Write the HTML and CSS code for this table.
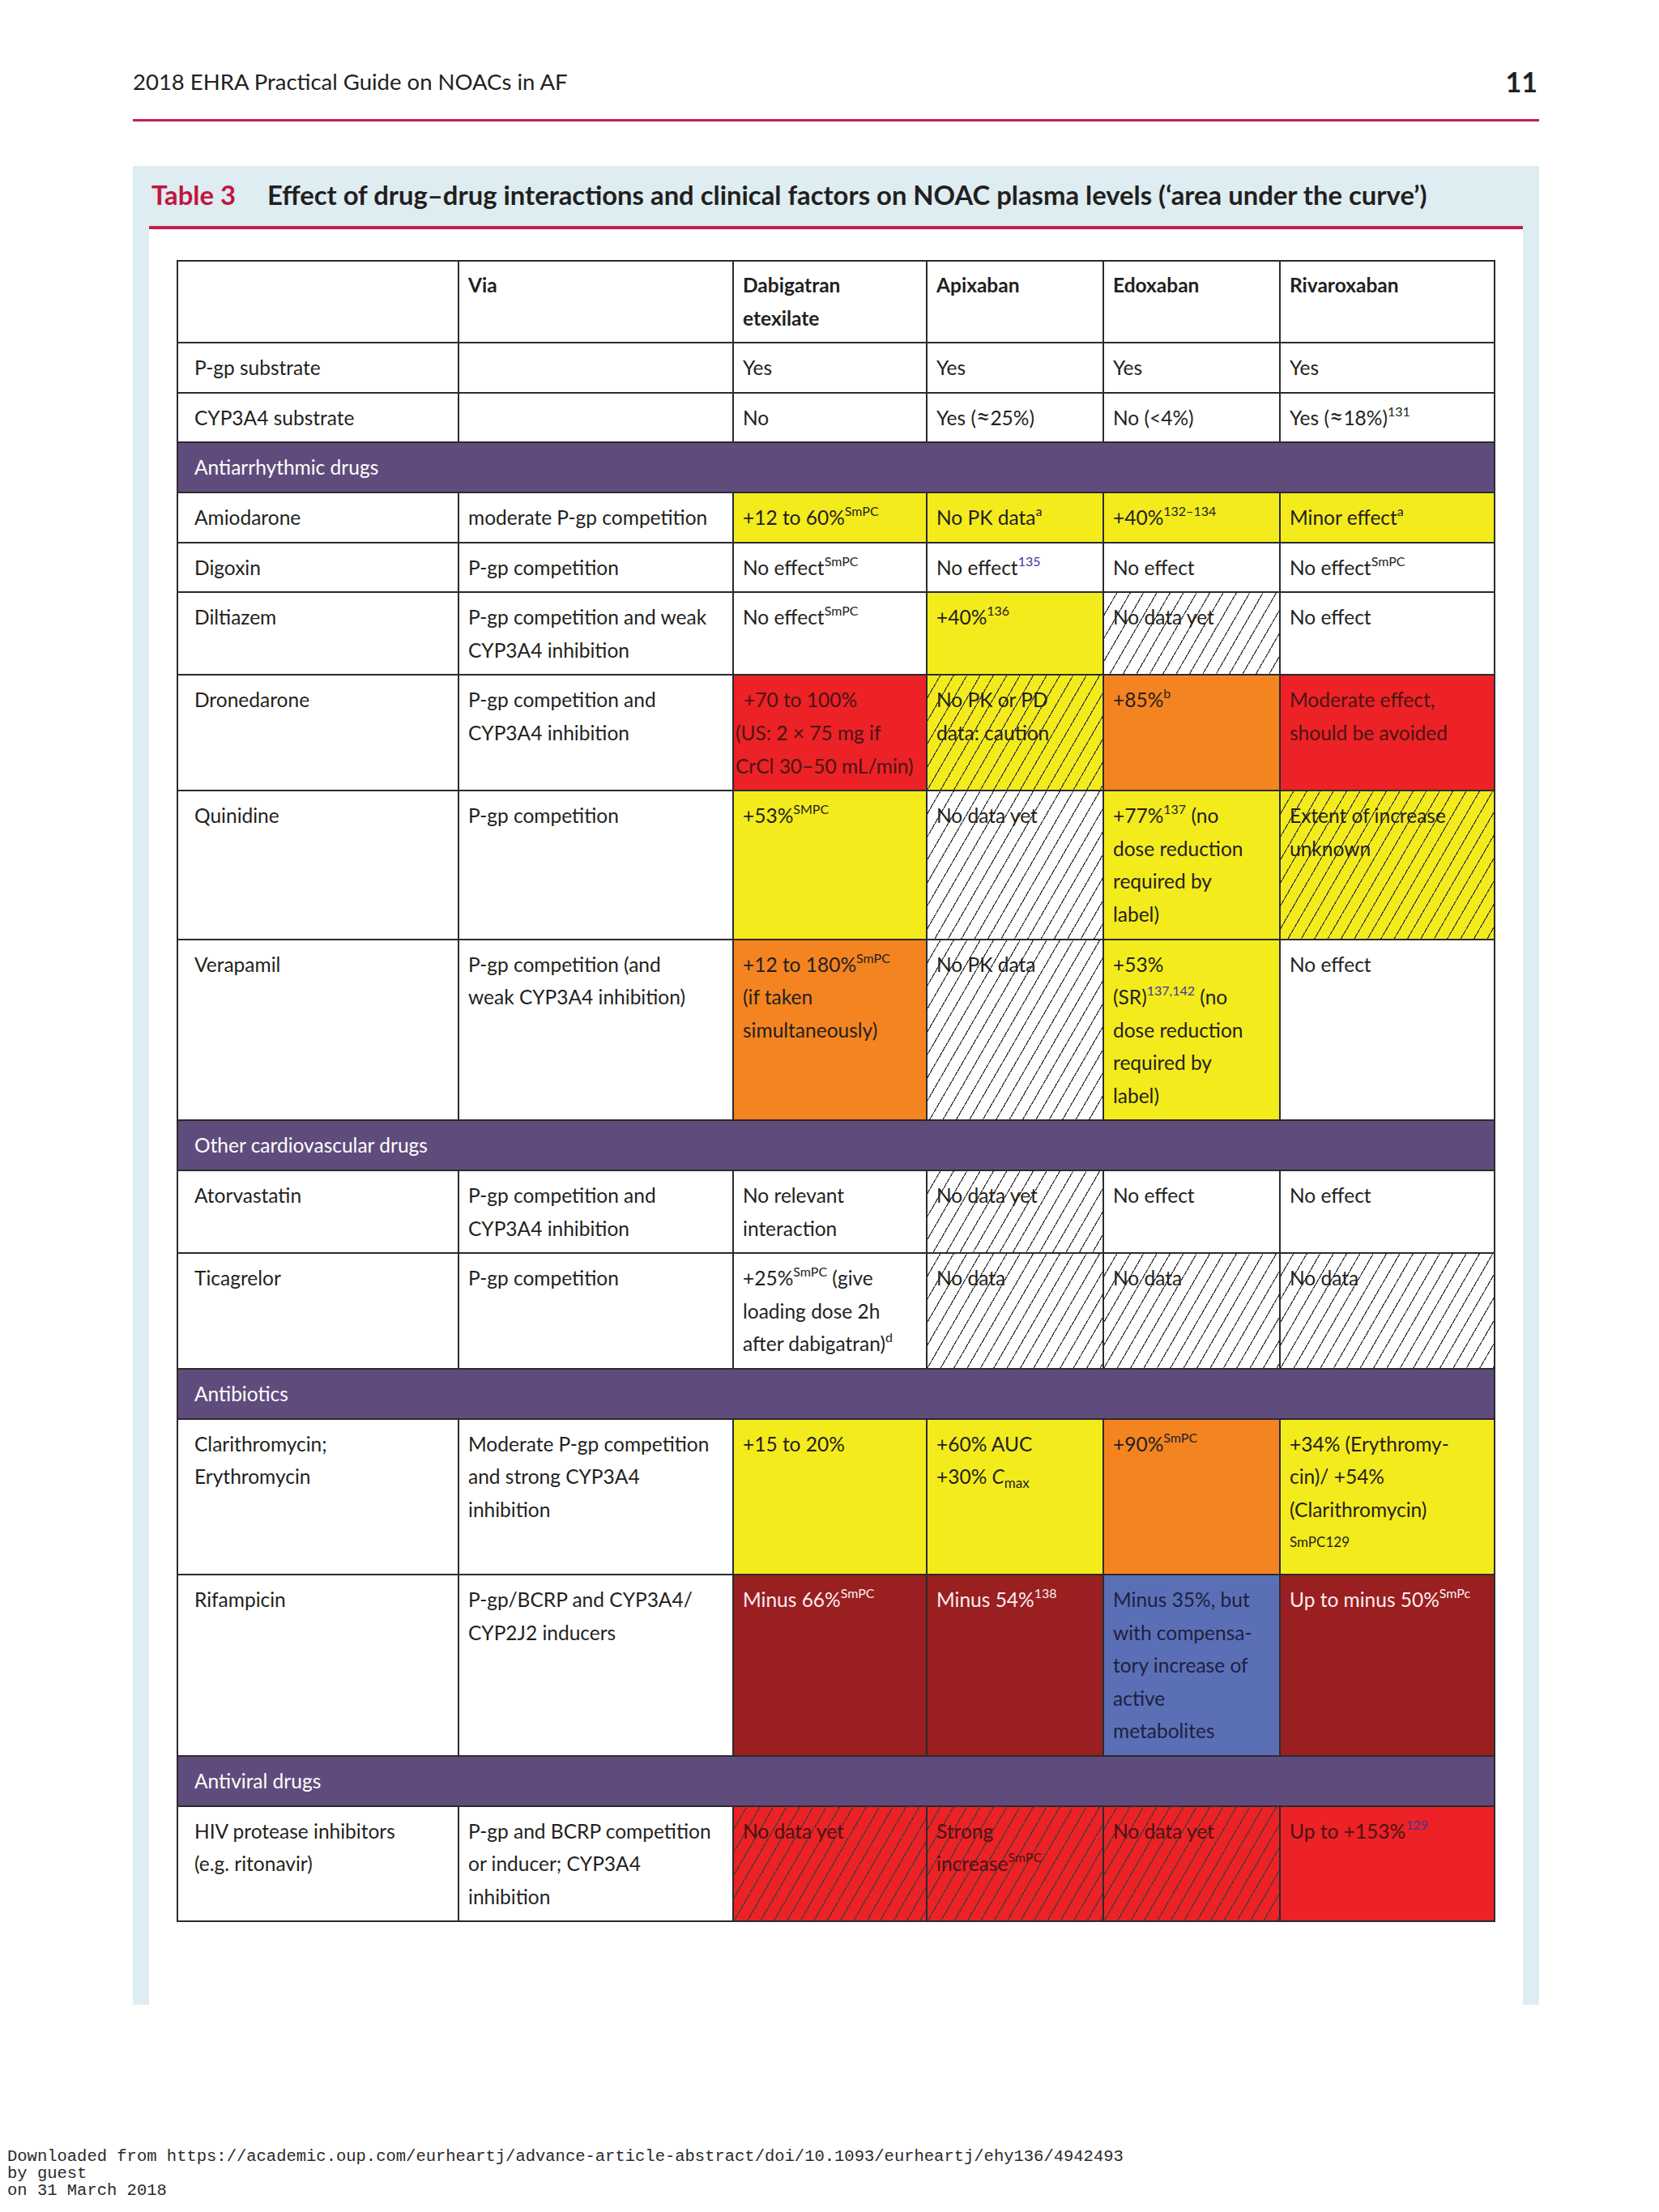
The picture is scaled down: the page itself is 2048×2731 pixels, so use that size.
FILE: index.html
```html
<!DOCTYPE html>
<html lang="en">
<head>
<meta charset="UTF-8">
<title>2018 EHRA Practical Guide on NOACs in AF - Table 3</title>
<link rel="stylesheet" href="styles.css">
</head>
<body>
<div class="page">
    <div class="running-head">
        <span class="journal">2018 EHRA Practical Guide on NOACs in AF</span>
        <span class="folio">11</span>
    </div>

    <div class="table-box">
        <div class="caption">
            <span class="label">Table 3</span>
            <span class="title">Effect of drug–drug interactions and clinical factors on NOAC plasma levels (‘area under the curve’)</span>
        </div>
        <div class="inner">
            <table class="ddi">
                <colgroup>
                    <col style="width:347px">
                    <col style="width:339px">
                    <col style="width:239px">
                    <col style="width:218px">
                    <col style="width:218px">
                    <col style="width:265px">
                </colgroup>
                <thead>
                    <tr>
                        <th></th>
                        <th>Via</th>
                        <th>Dabigatran<br>etexilate</th>
                        <th>Apixaban</th>
                        <th>Edoxaban</th>
                        <th>Rivaroxaban</th>
                    </tr>
                </thead>
                <tbody>
                    <tr>
                        <td>P-gp substrate</td>
                        <td></td>
                        <td>Yes</td>
                        <td>Yes</td>
                        <td>Yes</td>
                        <td>Yes</td>
                    </tr>
                    <tr>
                        <td>CYP3A4 substrate</td>
                        <td></td>
                        <td>No</td>
                        <td>Yes (<span class="approx">≈</span>25%)</td>
                        <td>No (&lt;4%)</td>
                        <td>Yes (<span class="approx">≈</span>18%)<sup>131</sup></td>
                    </tr>

                    <tr class="group"><td colspan="6">Antiarrhythmic drugs</td></tr>
                    <tr>
                        <td>Amiodarone</td>
                        <td>moderate P-gp competition</td>
                        <td class="yellow">+12 to 60%<sup>SmPC</sup></td>
                        <td class="yellow">No PK data<sup>a</sup></td>
                        <td class="yellow">+40%<sup>132–134</sup></td>
                        <td class="yellow">Minor effect<sup>a</sup></td>
                    </tr>
                    <tr>
                        <td>Digoxin</td>
                        <td>P-gp competition</td>
                        <td>No effect<sup>SmPC</sup></td>
                        <td>No effect<sup class="ref">135</sup></td>
                        <td>No effect</td>
                        <td>No effect<sup>SmPC</sup></td>
                    </tr>
                    <tr>
                        <td>Diltiazem</td>
                        <td>P-gp competition and weak<br>CYP3A4 inhibition</td>
                        <td>No effect<sup>SmPC</sup></td>
                        <td class="yellow">+40%<sup>136</sup></td>
                        <td class="hatch">No data yet</td>
                        <td>No effect</td>
                    </tr>
                    <tr>
                        <td>Dronedarone</td>
                        <td>P-gp competition and<br>CYP3A4 inhibition</td>
                        <td class="red tight"><span class="indent">+70 to 100%</span><br>(US: 2 × 75 mg if<br>CrCl 30–50 mL/min)</td>
                        <td class="yellow hatch">No PK or PD<br>data: caution</td>
                        <td class="orange">+85%<sup>b</sup></td>
                        <td class="red">Moderate effect,<br>should be avoided</td>
                    </tr>
                    <tr>
                        <td>Quinidine</td>
                        <td>P-gp competition</td>
                        <td class="yellow">+53%<sup>SMPC</sup></td>
                        <td class="hatch">No data yet</td>
                        <td class="yellow">+77%<sup>137</sup> (no<br>dose reduction<br>required by<br>label)</td>
                        <td class="yellow hatch">Extent of increase<br>unknown</td>
                    </tr>
                    <tr>
                        <td>Verapamil</td>
                        <td>P-gp competition (and<br>weak CYP3A4 inhibition)</td>
                        <td class="orange">+12 to 180%<sup>SmPC</sup><br>(if taken<br>simultaneously)</td>
                        <td class="hatch">No PK data</td>
                        <td class="yellow">+53%<br>(SR)<sup class="ref">137,142</sup> (no<br>dose reduction<br>required by<br>label)</td>
                        <td>No effect</td>
                    </tr>

                    <tr class="group"><td colspan="6">Other cardiovascular drugs</td></tr>
                    <tr>
                        <td>Atorvastatin</td>
                        <td>P-gp competition and<br>CYP3A4 inhibition</td>
                        <td>No relevant<br>interaction</td>
                        <td class="hatch">No data yet</td>
                        <td>No effect</td>
                        <td>No effect</td>
                    </tr>
                    <tr>
                        <td>Ticagrelor</td>
                        <td>P-gp competition</td>
                        <td>+25%<sup>SmPC</sup> (give<br>loading dose 2h<br>after dabigatran)<sup>d</sup></td>
                        <td class="hatch">No data</td>
                        <td class="hatch">No data</td>
                        <td class="hatch">No data</td>
                    </tr>

                    <tr class="group"><td colspan="6">Antibiotics</td></tr>
                    <tr>
                        <td>Clarithromycin;<br>Erythromycin</td>
                        <td>Moderate P-gp competition<br>and strong CYP3A4<br>inhibition</td>
                        <td class="yellow">+15 to 20%</td>
                        <td class="yellow">+60% AUC<br>+30% <i>C</i><sub>max</sub></td>
                        <td class="orange">+90%<sup>SmPC</sup></td>
                        <td class="yellow">+34% (Erythromy-<br>cin)/ +54%<br>(Clarithromycin)<br><span class="tiny">SmPC129</span></td>
                    </tr>
                    <tr>
                        <td>Rifampicin</td>
                        <td>P-gp/BCRP and CYP3A4/<br>CYP2J2 inducers</td>
                        <td class="darkred">Minus 66%<sup>SmPC</sup></td>
                        <td class="darkred">Minus 54%<sup>138</sup></td>
                        <td class="blue">Minus 35%, but<br>with compensa-<br>tory increase of<br>active<br>metabolites</td>
                        <td class="darkred">Up to minus 50%<sup>SmPc</sup></td>
                    </tr>

                    <tr class="group"><td colspan="6">Antiviral drugs</td></tr>
                    <tr>
                        <td>HIV protease inhibitors<br>(e.g. ritonavir)</td>
                        <td>P-gp and BCRP competition<br>or inducer; CYP3A4<br>inhibition</td>
                        <td class="red hatch">No data yet</td>
                        <td class="red hatch">Strong<br>increase<sup>SmPC</sup></td>
                        <td class="red hatch">No data yet</td>
                        <td class="red">Up to +153%<sup class="ref">129</sup></td>
                    </tr>
                </tbody>
            </table>
        </div>
    </div>
</div>

<div class="download-note">Downloaded from https://academic.oup.com/eurheartj/advance-article-abstract/doi/10.1093/eurheartj/ehy136/4942493<br>by guest<br>on 31 March 2018</div>
</body>
</html>
```

FILE: styles.css
```css
body {
    margin: 0;
    background-color: #ffffff;
    color: #231f20;
    font-family: 'Lato', 'Open Sans', sans-serif;
}

.page {
    padding: 0 148px 0 164px;
}

.running-head {
    display: flex;
    justify-content: space-between;
    align-items: flex-end;
    height: 150px;
    padding-bottom: 29px;
    box-sizing: border-box;
    border-bottom: 3px solid #c4204a;
}

.journal {
    font-size: 27.5px;
    font-weight: 400;
    line-height: 34px;
}

.folio {
    font-size: 34px;
    font-weight: 700;
    line-height: 34px;
    margin-right: 2px;
}

.table-box {
    margin-top: 55px;
    background-color: #deedf1;
    padding: 0 20px;
}

.caption {
    display: flex;
    align-items: center;
    gap: 39px;
    height: 74px;
    margin: 0 -20px;
    padding: 0 0 4px 23px;
    box-sizing: border-box;
    font-size: 32.8px;
    font-weight: 700;
}

.caption .label {
    color: #c3153f;
}

.inner {
    background-color: #ffffff;
    border-top: 4px solid #c4204a;
    padding: 38px 0 102px;
}

.ddi {
    border-collapse: collapse;
    table-layout: fixed;
    width: 1628px;
    margin: 0 auto;
    font-size: 24.5px;
    line-height: 40.6px;
}

.ddi th,
.ddi td {
    border: 2px solid #2b2a2e;
    padding: 10px 10px 9px 11px;
    text-align: left;
    vertical-align: top;
    white-space: nowrap;
}

.ddi th {
    font-weight: 700;
    padding-top: 9px;
}

.ddi td:first-child,
.ddi th:first-child {
    padding-left: 20px;
}

.ddi sup {
    font-size: 16px;
    line-height: 0;
    vertical-align: 11px;
}

.ddi sub {
    font-size: 17px;
    line-height: 0;
    vertical-align: -5px;
}

.ddi sup.ref {
    color: #3a3a9c;
}

.approx {
    font-size: 30px;
    line-height: 0;
}

.ddi .tiny {
    font-size: 17px;
    vertical-align: 12px;
}

.ddi tr.group td {
    background-color: #604c7c;
    color: #ffffff;
    padding-left: 20px;
    font-weight: 400;
}

.yellow {
    background-color: #f4eb1c;
}

.orange {
    background-color: #f48420;
}

.red {
    background-color: #ec2226;
    color: #4a1414;
}

.darkred {
    background-color: #991f21;
    color: #fbeeee;
}

.blue {
    background-color: #5b6fb6;
    color: #1d2140;
}

.hatch {
    background-image: repeating-linear-gradient(120deg, transparent 0 13px, #3d3d3d 13px 14.2px);
}

.ddi td.tight {
    padding-left: 2px;
    padding-right: 0;
}

.indent {
    margin-left: 10px;
}

.download-note {
    margin-top: 177px;
    padding: 0 0 24px 9px;
    font-family: 'Liberation Mono', monospace;
    font-size: 20.5px;
    line-height: 21px;
    color: #2a2a2a;
}
```
